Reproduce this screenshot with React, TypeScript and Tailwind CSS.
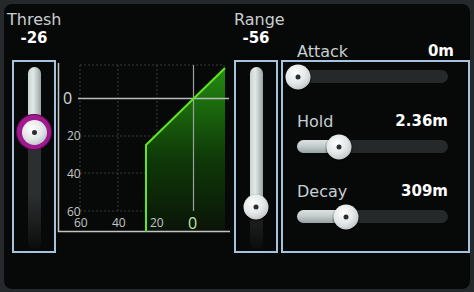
import React from 'react';

const labelFont = "font-['DejaVu_Sans',sans-serif]";

const Knob = ({ ring = false }: { ring?: boolean }) => (
  <div
    className={
      ring
        ? 'w-[34px] h-[34px] rounded-full bg-[#a1198e] shadow-[0_0_0_1px_#5a0d50] flex items-center justify-center'
        : 'w-[25px] h-[25px] rounded-full shadow-[0_1px_2px_#000] flex items-center justify-center bg-[radial-gradient(circle_at_40%_35%,#ffffff_0%,#e4e8e8_45%,#a9b1b1_100%)]'
    }
  >
    {ring ? (
      <div className="w-[25px] h-[25px] rounded-full flex items-center justify-center bg-[radial-gradient(circle_at_40%_35%,#ffffff_0%,#e4e8e8_45%,#a9b1b1_100%)]">
        <div className="w-[5px] h-[5px] rounded-full bg-[#2a2e30]" />
      </div>
    ) : (
      <div className="w-[5px] h-[5px] rounded-full bg-[#2a2e30]" />
    )}
  </div>
);

// vertical fader: pos = px from track top to knob center
const VFader = ({ pos, ring = false }: { pos: number; ring?: boolean }) => (
  <div className="w-[44px] h-[193px] border-2 border-[#a6c4de] flex justify-center pt-[5px]">
    <div className="relative w-[13px] h-[182px] rounded-full bg-[linear-gradient(to_bottom,#2c2f30_70%,#0b0d0d)] ">
      <div
        className="absolute left-0 top-0 w-[13px] rounded-t-full bg-[linear-gradient(to_right,#c9d2d2,#e2e8e8_40%,#9aa4a4)]"
        style={{ height: pos }}
      />
      <div
        className="absolute left-1/2 -translate-x-1/2 -translate-y-1/2"
        style={{ top: pos }}
      >
        <Knob ring={ring} />
      </div>
    </div>
  </div>
);

// horizontal slider: pos = px from track left to knob center
const HSlider = ({ pos }: { pos: number }) => (
  <div className="relative w-[151px] h-[13px] rounded-full bg-[#262929]">
    <div
      className="absolute left-0 top-0 h-[13px] rounded-l-full bg-[linear-gradient(to_bottom,#dde3e3,#c2caca_50%,#97a1a1)]"
      style={{ width: pos }}
    />
    <div className="absolute top-1/2 -translate-x-1/2 -translate-y-1/2" style={{ left: pos }}>
      <Knob />
    </div>
  </div>
);

const Graph = () => (
  <svg width={175} height={178} className="mt-[56px] shrink-0" style={{ fontFamily: "'Open Sans', sans-serif" }}>
    <defs>
      <linearGradient id="fill" x1="0" y1="0" x2="0" y2="1">
        <stop offset="0%" stopColor="#248a10" />
        <stop offset="55%" stopColor="#0f3a08" />
        <stop offset="100%" stopColor="#0a1408" />
      </linearGradient>
    </defs>
    {[23, 61, 100, 167].map((x) => (
      <line key={x} x1={x} y1={5} x2={x} y2={151} stroke="#3a3d3c" strokeDasharray="2 2" />
    ))}
    {[5, 76, 113, 151].map((y) => (
      <line key={y} x1={23} y1={y} x2={167} y2={y} stroke="#3a3d3c" strokeDasharray="2 2" />
    ))}
    <polygon points="89,172 89,85 168,8 168,172" fill="url(#fill)" />
    <line x1={21} y1={38.5} x2={172} y2={38.5} stroke="#b9bcbc" strokeWidth={1.3} />
    <line x1={136.5} y1={5} x2={136.5} y2={151} stroke="#9ca09e" strokeWidth={1.2} />
    <line x1={1.5} y1={3} x2={1.5} y2={172} stroke="#c2c4c4" strokeWidth={1.5} />
    <line x1={1} y1={171.5} x2={173} y2={171.5} stroke="#c2c4c4" strokeWidth={1.5} />
    <polyline points="89,172 89,85 168,8" fill="none" stroke="#5fe620" strokeWidth={2} />
    <text x={6} y={44} fontSize={16} fill="#d6d8d8">0</text>
    <text x={10} y={80} fontSize={12} fill="#c4c6c6">20</text>
    <text x={10} y={118} fontSize={12} fill="#c4c6c6">40</text>
    <text x={10} y={156} fontSize={12} fill="#c4c6c6">60</text>
    <text x={17} y={167} fontSize={12} fill="#c4c6c6">60</text>
    <text x={55} y={167} fontSize={12} fill="#c4c6c6">40</text>
    <text x={93} y={167} fontSize={12} fill="#c4c6c6">20</text>
    <text x={131} y={169} fontSize={16} fill="#c2e2ac">0</text>
  </svg>
);

const App = () => {
  return (
    <div className="w-[474px] h-[292px] bg-[#25292b] pt-[4px] pl-[4px] pr-[4px] pb-[3px]">
      <div className={`h-full rounded-[8px] bg-[#070909] flex items-start ${labelFont}`}>
        {/* Thresh */}
        <div className="w-[53px] shrink-0 flex flex-col pt-[6px]">
          <div className="pl-[3px] text-[16px] leading-[19px] text-[#c9ced0]">Thresh</div>
          <div className="ml-[8px] w-[44px] text-center text-[15px] leading-[19px] font-bold text-white">-26</div>
          <div className="ml-[8px] mt-[12px]">
            <VFader pos={65} ring />
          </div>
        </div>

        <Graph />

        {/* Range */}
        <div className="w-[46px] shrink-0 flex flex-col pt-[6px] pl-[2px]">
          <div className="text-[16px] leading-[19px] text-[#c9ced0]">Range</div>
          <div className="w-[44px] text-center text-[15px] leading-[19px] font-bold text-white">-56</div>
          <div className="mt-[12px]">
            <VFader pos={140} />
          </div>
        </div>

        {/* Attack / Hold / Decay */}
        <div className="ml-[3px] w-[189px] shrink-0 flex flex-col pt-[39px]">
          <div className="flex justify-between items-end px-[16px] h-[17px] leading-[17px]">
            <span className="text-[16px] text-[#c9ced0]">Attack</span>
            <span className="text-[15px] font-bold text-white">0m</span>
          </div>
          <div className="h-[193px] border-2 border-[#a6c4de] pl-[14px] pr-[20px] pt-[8px]">
            <HSlider pos={1} />
            <div className="mt-[29px] flex justify-between items-center h-[19px] leading-[19px]">
              <span className="text-[16px] text-[#c9ced0]">Hold</span>
              <span className="text-[15px] font-bold text-white">2.36m</span>
            </div>
            <div className="mt-[9px]">
              <HSlider pos={42} />
            </div>
            <div className="mt-[29px] flex justify-between items-center h-[19px] leading-[19px]">
              <span className="text-[16px] text-[#c9ced0]">Decay</span>
              <span className="text-[15px] font-bold text-white">309m</span>
            </div>
            <div className="mt-[9px]">
              <HSlider pos={49} />
            </div>
          </div>
        </div>
      </div>
    </div>
  );
};

export default App;
